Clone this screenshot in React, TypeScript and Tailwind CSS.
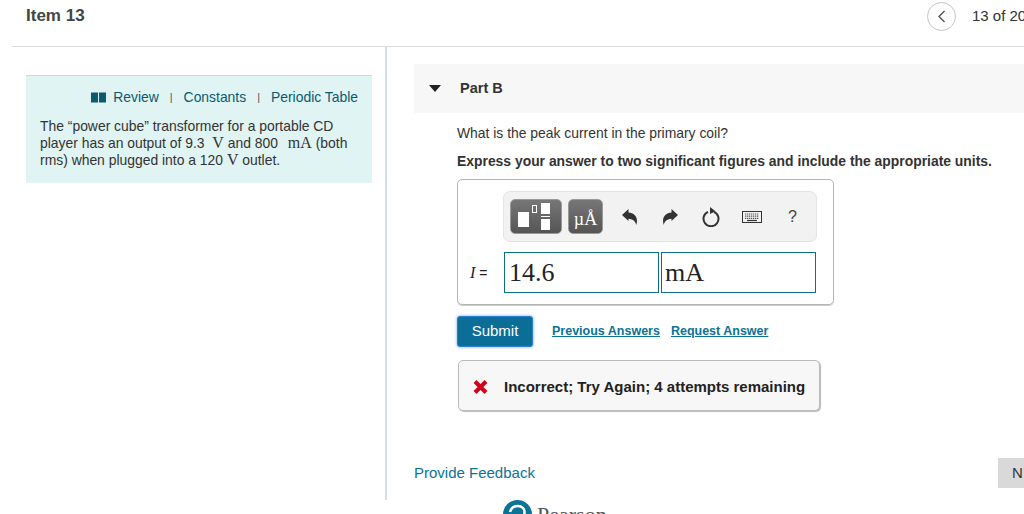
const sans = { fontFamily: '"Liberation Sans", Arial, sans-serif' };
const serif = { fontFamily: '"Liberation Serif", serif' };

function BookIcon() {
  return (
    <svg width="15" height="11" viewBox="0 0 15 11" className="mr-[7px]">
      <path d="M0 .5h7v10H0zM8 .5h7v10H8z" fill="#0b5a70" />
    </svg>
  );
}

function Toolbar() {
  return (
    <div className="ml-[45px] flex h-[51px] w-[314px] items-center rounded-[7px] border border-[#e3e3e3] bg-[#f2f2f2] pl-[6px]">
      <div className="relative h-[35px] w-[52px] shrink-0 rounded-[5px] border border-[#999] bg-gradient-to-b from-[#777] to-[#555]">
        <div className="absolute left-[7px] top-[12px] h-[15px] w-[11px] bg-white" />
        <div className="absolute left-[21px] top-[5px] h-[8px] w-[5px] border border-white" />
        <div className="absolute left-[30px] top-[3px] h-[11px] w-[9px] bg-white" />
        <div className="absolute left-[30px] top-[16px] h-[1px] w-[9px] bg-white" />
        <div className="absolute left-[30px] top-[19px] h-[11px] w-[9px] bg-white" />
      </div>
      <div
        className="relative ml-[6px] flex h-[35px] w-[35px] shrink-0 items-end justify-center rounded-[5px] border border-[#999] bg-gradient-to-b from-[#777] to-[#555] pb-[5px] text-[18px] leading-none text-white"
        style={serif}
      >
        µÅ
      </div>
      <svg width="15" height="16" viewBox="0 0 15 16" className="ml-[19px] mt-[1px] shrink-0">
        <path d="M0 6l6.500-6v3.600c5 .2 8.500 3.500 8.500 8.400 0 1.400-.3 2.700-.8 4-.5-3-2.700-6-7.700-6.200V12z" fill="#333" />
      </svg>
      <svg width="15" height="16" viewBox="0 0 15 16" className="ml-[26px] mt-[1px] shrink-0">
        <path d="M15 6L8.500 0v3.600C3.500 3.800 0 7.100 0 12c0 1.400.3 2.700.8 4 .5-3 2.700-6 7.700-6.200V12z" fill="#333" />
      </svg>
      <svg width="18" height="20" viewBox="0 0 18 20" className="ml-[24px] shrink-0">
        <path d="M6 4.800a7.500 7.500 0 1 0 6 0" fill="none" stroke="#333" strokeWidth="2" />
        <path d="M8 0l5.500 4.300L8 7z" fill="#333" />
      </svg>
      <svg width="20" height="12" viewBox="0 0 20 12" className="ml-[22px] shrink-0">
        <rect x=".5" y=".5" width="19" height="11" fill="#f2f2f2" stroke="#333" />
        <path d="M3 3h14M3 5.200h14M3 7.400h14" stroke="#555" strokeWidth="1.200" strokeDasharray="1.300 .7" />
        <path d="M5 9.500h10" stroke="#333" strokeWidth="1.200" />
      </svg>
      <span className="ml-[26px] text-[16px] leading-none text-[#444]">?</span>
    </div>
  );
}

function AnswerBox() {
  return (
    <div className="mt-[9px] h-[126px] w-[377px] rounded-[5px] border border-[#b5b5b5] pt-[11px] shadow-[0_1px_0_#ccc]">
      <Toolbar />
      <div className="mt-[10px] flex items-center">
        <span className="ml-[12px] w-[34px] text-[14px] text-[#222]">
          <i style={serif} className="text-[16px]">I</i> =
        </span>
        <div className="flex h-[41px] items-center gap-[2px] text-[26px] text-[#222]" style={serif}>
          <div className="flex h-[41px] w-[155px] items-center border border-[#0c6d8c] pl-[4px]">14.6</div>
          <div className="flex h-[41px] w-[155px] items-center border border-[#0c6d8c] pl-[3px]">mA</div>
        </div>
      </div>
    </div>
  );
}

export default function App() {
  return (
    <div className="relative h-[514px] w-[1024px] overflow-hidden bg-white" style={sans}>
      <header className="ml-[12px] flex h-[47px] items-start justify-between border-b border-[#dcdcdc]">
        <h1 className="ml-[14px] mt-[6px] text-[17px] font-bold leading-[19px] text-[#444]">Item 13</h1>
        <div className="mr-[-3px] mt-[2px] flex w-[100px] items-center">
          <div className="flex h-[29px] w-[29px] shrink-0 items-center justify-center rounded-full border border-[#c4c4c4]">
            <svg width="9" height="13" viewBox="0 0 9 13">
              <path d="M7.500 1L2 6.500 7.500 12" fill="none" stroke="#555" strokeWidth="1.400" />
            </svg>
          </div>
          <span className="ml-[16px] whitespace-nowrap text-[15px] text-[#333]">13 of 20</span>
        </div>
      </header>

      <div className="flex h-[453px]">
        <aside className="h-full w-[387px] shrink-0 border-r-2 border-[#d3dfe6] pl-[26px] pt-[28px]">
          <div className="h-[108px] w-[346px] border-t border-[#c8dcdc] bg-[#e0f4f4] pl-[14px] pr-[14px] pt-[12px]">
            <div className="flex items-center justify-end text-[13.900px] leading-[18px] text-[#0b5a70]">
              <BookIcon />
              <span>Review</span>
              <span className="mx-[11px] text-[11px] text-[#555]">|</span>
              <span>Constants</span>
              <span className="mx-[11px] text-[11px] text-[#555]">|</span>
              <span>Periodic Table</span>
            </div>
            <p className="mt-[12px] text-[13.900px] leading-[17px] text-[#333]">
              The “power cube” transformer for a portable CD player has an output of 9.3{" "}
              <span className="ml-[4px] text-[16px] leading-none" style={serif}>V</span> and 800{" "}
              <span className="ml-[6px] text-[16px] leading-none" style={serif}>mA</span> (both
              rms) when plugged into a 120{" "}
              <span className="text-[16px] leading-none" style={serif}>V</span> outlet.
            </p>
          </div>
        </aside>

        <main className="relative min-w-0 flex-1 pl-[27px] pt-[17px]">
          <div className="flex h-[49px] items-center bg-[#f7f7f7] pl-[15px]">
            <svg width="12" height="7" viewBox="0 0 12 7">
              <path d="M0 0h12L6 7z" fill="#222" />
            </svg>
            <span className="ml-[19px] text-[14.500px] font-bold text-[#333]">Part B</span>
          </div>

          <div className="pl-[43px]">
            <p className="mt-[12px] text-[13.900px] leading-[17px] text-[#333]">What is the peak current in the primary coil?</p>
            <p className="mt-[11px] text-[13.900px] font-bold leading-[17px] text-[#333]">
              Express your answer to two significant figures and include the appropriate units.
            </p>
            <AnswerBox />

            <div className="mt-[11px] flex items-center">
              <button className="h-[31px] w-[76px] rounded-[3px] border border-[#2f7fd8] bg-[#0b6e96] text-[15px] text-white shadow-[0_0_3px_#5b9df0]">
                Submit
              </button>
              <span className="mb-[1px] ml-[19px] text-[12.500px] font-bold text-[#0b7396] underline">Previous Answers</span>
              <span className="mb-[1px] ml-[11px] text-[12.500px] font-bold text-[#0b7396] underline">Request Answer</span>
            </div>

            <div className="ml-[1px] mt-[13px] flex h-[51px] w-[362px] items-center rounded-[5px] border border-[#bbb] bg-[#f7f7f7] shadow-[1px_1px_1px_#bbb]">
              <svg width="15" height="14" viewBox="0 0 15 14" className="ml-[14px] mt-[2px]">
                <path d="M2 1.500l11 11M13 1.500l-11 11" stroke="#d0021b" strokeWidth="4" />
              </svg>
              <span className="ml-[16px] whitespace-nowrap pt-[4px] text-[15px] font-bold text-[#222]">
                Incorrect; Try Again; 4 attempts remaining
              </span>
            </div>
          </div>

          <div className="mt-[47px] flex items-center justify-between">
            <span className="text-[15px] text-[#0b7396]">Provide Feedback</span>
            <div className="flex h-[30px] w-[26px] items-center overflow-hidden bg-[#d9d9d9] pl-[14px] text-[15px] text-[#333]">
              N
            </div>
          </div>
        </main>
      </div>

      <div className="absolute left-[503px] top-[500px] flex items-start">
        <svg width="29" height="29" viewBox="0 0 29 29">
          <circle cx="14.500" cy="14.500" r="14.500" fill="#0b7396" />
          <path d="M7 12c1-4 4-6 8-6s7 3 6.500 7-3.500 6-7 6" fill="none" stroke="#fff" strokeWidth="2.500" />
        </svg>
        <span className="ml-[5px] mt-[4px] text-[22px] leading-none text-[#555]" style={serif}>
          Pearson
        </span>
      </div>
    </div>
  );
}
